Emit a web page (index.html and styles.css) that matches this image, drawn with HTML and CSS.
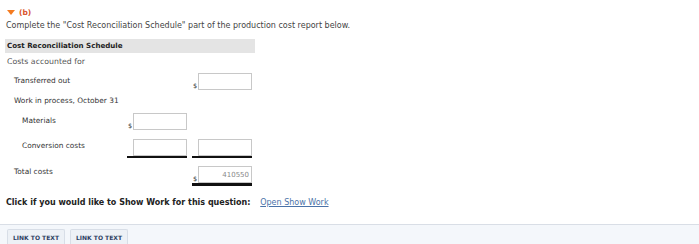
FILE: index.html
```html
<!DOCTYPE html>
<html lang="en">
<head>
  <meta charset="UTF-8" />
  <title>Cost Reconciliation Schedule</title>
  <link rel="stylesheet" href="styles.css">
</head>
<body>
  <div class="part">
    <div class="part-title"><span class="arrow"></span>(b)</div>
    <p class="prompt">Complete the "Cost Reconciliation Schedule" part of the production cost report below.</p>

    <div class="schedule">
      <div class="sched-head">Cost Reconciliation Schedule</div>
      <div class="sched-sub">Costs accounted for</div>

      <div class="row">
        <span class="label">Transferred out</span>
        <span class="cell"></span>
        <span class="cell"><span class="cur">$</span><input type="text"></span>
      </div>
      <div class="row short">
        <span class="label">Work in process, October 31</span>
      </div>
      <div class="row">
        <span class="label indent">Materials</span>
        <span class="cell"><span class="cur">$</span><input type="text"></span>
        <span class="cell"></span>
      </div>
      <div class="row">
        <span class="label indent">Conversion costs</span>
        <span class="cell ruled"><span class="cur"></span><input type="text"></span>
        <span class="cell ruled"><span class="cur"></span><input type="text"></span>
      </div>
      <div class="row">
        <span class="label">Total costs</span>
        <span class="cell"></span>
        <span class="cell double"><span class="cur">$</span><input type="text" class="filled" value="410550" readonly></span>
      </div>
    </div>

    <p class="show-work">Click if you would like to Show Work for this question: <a href="#">Open Show Work</a></p>
  </div>

  <div class="toolbar">
    <button>Link to Text</button>
    <button>Link to Text</button>
  </div>
</body>
</html>
```
FILE: styles.css
```css
body {
  margin: 0;
  font-family: "DejaVu Sans", Verdana, sans-serif;
  color: #444;
  background: #fff;
}
.part {
  padding: 7px 0 0 6px;
}
.part-title {
  display: flex;
  align-items: center;
  gap: 4px;
  font-size: 7.5px;
  font-weight: bold;
  color: #d9542b;
  height: 10px;
  padding-left: 1px;
}
.arrow {
  width: 0;
  height: 0;
  border-left: 4px solid transparent;
  border-right: 4px solid transparent;
  border-top: 5px solid #f47b20;
}
.prompt {
  margin: 4px 0 0;
  font-size: 8px;
  color: #444;
}
.schedule {
  margin-top: 9px;
  width: 250px;
  margin-left: -1px;
}
.sched-head {
  background: #e4e4e4;
  font-size: 7.1px;
  font-weight: bold;
  color: #222;
  height: 14px;
  line-height: 14px;
  padding-left: 2px;
}
.sched-sub {
  font-size: 7.8px;
  color: #555;
  padding: 4px 0 0 2px;
  height: 12px;
}
.row {
  display: grid;
  grid-template-columns: 117px 60px 60px;
  column-gap: 5px;
  align-items: center;
  height: 25px;
}
.row.short {
  height: 15px;
}
.label {
  font-size: 7.4px;
  color: #333;
  padding-left: 9px;
  align-self: center;
  margin-top: -2px;
}
.label.indent {
  padding-left: 17px;
}
.cell {
  display: flex;
  align-items: flex-end;
  height: 17px;
}
.cur {
  width: 6px;
  font-size: 6.5px;
  color: #444;
  line-height: 8px;
  padding-left: 1px;
}
.cell input {
  box-sizing: border-box;
  width: 54px;
  height: 17px;
  margin: 0;
  border: 1px solid #c8c8c8;
  padding: 0 2px;
  font-family: inherit;
  font-size: 7px;
  background: #fff;
}
.cell input.filled {
  text-align: right;
  color: #888;
}
.cell.ruled {
  border-bottom: 2px solid #111;
  height: 18px;
  margin-top: 2px;
}
.cell.double {
  border-bottom: 3px solid #111;
  height: 19px;
  margin-top: 5px;
}
.show-work {
  margin: 14px 0 0;
  font-size: 8px;
  font-weight: bold;
  color: #222;
}
.show-work a {
  font-weight: normal;
  color: #4a72a8;
  margin-left: 7px;
}
.toolbar {
  margin-top: 17px;
  border-top: 1px solid #d9dee6;
  background: #f4f7fb;
  height: 20px;
  padding: 4px 0 0 7px;
  display: flex;
  gap: 5px;
  box-sizing: border-box;
}
.toolbar button {
  font-family: inherit;
  font-size: 6px;
  font-weight: bold;
  text-transform: uppercase;
  color: #2e3f63;
  background: #edf1f6;
  border: 1px solid #d8dee7;
  border-bottom: none;
  padding: 0 5px;
  height: 16px;
  border-radius: 2px 2px 0 0;
}
```
